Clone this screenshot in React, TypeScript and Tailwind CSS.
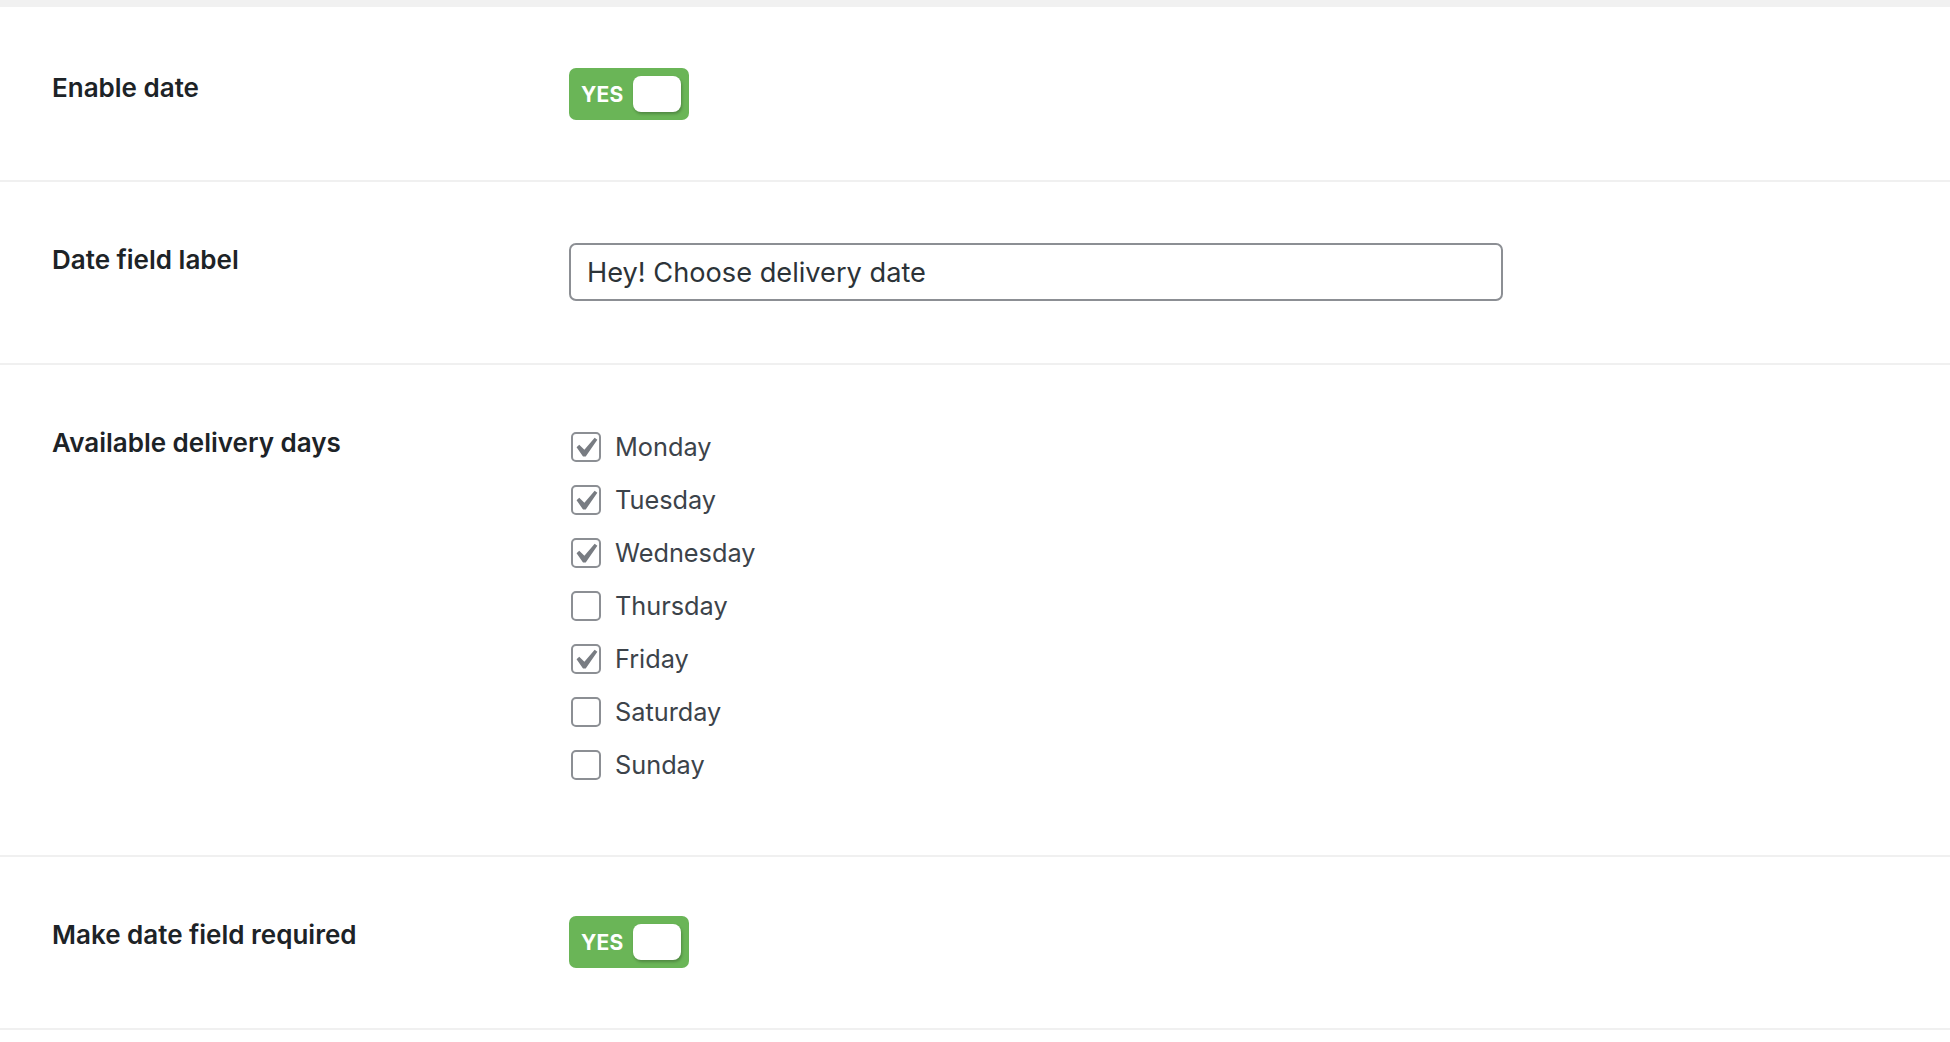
import React from 'react';

const font = { fontFamily: 'Inter, "Noto Sans", "Liberation Sans", sans-serif' };

function Toggle() {
  return (
    <div className="flex h-[52px] w-[120px] items-center justify-between rounded-[7px] bg-[#6ab557] pl-[12px] pr-[8px]">
      <span className="text-[21px] font-bold leading-none tracking-[0.2px] text-white">YES</span>
      <span className="h-[36px] w-[48px] rounded-[8px] bg-white shadow-[1px_2px_3px_rgba(0,0,0,0.25)]"></span>
    </div>
  );
}

function DayCheckbox({ label, checked }: { label: string; checked: boolean }) {
  return (
    <label className="flex h-[42px] items-center gap-[14px] pl-[2px]">
      <span className="relative h-[30px] w-[30px] shrink-0 rounded-[5px] border-2 border-[#8c8f94] bg-white">
        {checked && (
          <svg viewBox="0 0 20 20" className="absolute left-[-8px] top-[-6px] h-[40px] w-[40px]">
            <path d="M14.83 4.89l1.34.94-5.81 8.38H9.02L5.78 9.67l1.34-1.25 2.57 2.4z" fill="#787c82" />
          </svg>
        )}
      </span>
      <span className="text-[25.3px] leading-none text-[#3c434a]">{label}</span>
    </label>
  );
}

export default function App() {
  const days = [
    { label: 'Monday', checked: true },
    { label: 'Tuesday', checked: true },
    { label: 'Wednesday', checked: true },
    { label: 'Thursday', checked: false },
    { label: 'Friday', checked: true },
    { label: 'Saturday', checked: false },
    { label: 'Sunday', checked: false },
  ];

  const labelCls = 'text-[26px] font-semibold leading-[32px] text-[#1d2327]';

  return (
    <div className="min-h-screen bg-white" style={font}>
      <div className="h-[7px] bg-[#f1f1f1]"></div>

      {/* Enable date */}
      <div className="grid grid-cols-[517px_1fr] border-b-2 border-[#f0f0f0] pb-[60px] pl-[52px] pt-[61px]">
        <div className={`${labelCls} pt-[4px]`}>Enable date</div>
        <div>
          <Toggle />
        </div>
      </div>

      {/* Date field label */}
      <div className="grid grid-cols-[517px_1fr] border-b-2 border-[#f0f0f0] pb-[62px] pl-[52px] pt-[61px]">
        <div className={`${labelCls} pt-[1px]`}>Date field label</div>
        <div>
          <input
            type="text"
            defaultValue="Hey! Choose delivery date"
            className="h-[58px] w-[934px] rounded-[7px] border-2 border-[#8c8f94] bg-white px-[16px] text-[27.2px] text-[#2c3338] outline-none"
          />
        </div>
      </div>

      {/* Available delivery days */}
      <div className="grid grid-cols-[517px_1fr] border-b-2 border-[#f0f0f0] pb-[69px] pl-[52px] pt-[61px]">
        <div className={`${labelCls} pt-[1px]`}>Available delivery days</div>
        <div className="flex flex-col gap-[11px]">
          {days.map((d) => (
            <DayCheckbox key={d.label} label={d.label} checked={d.checked} />
          ))}
        </div>
      </div>

      {/* Make date field required */}
      <div className="grid grid-cols-[517px_1fr] border-b-2 border-[#f0f0f0] pb-[60px] pl-[52px] pt-[59px]">
        <div className={`${labelCls} pt-[3px]`}>Make date field required</div>
        <div>
          <Toggle />
        </div>
      </div>
    </div>
  );
}
